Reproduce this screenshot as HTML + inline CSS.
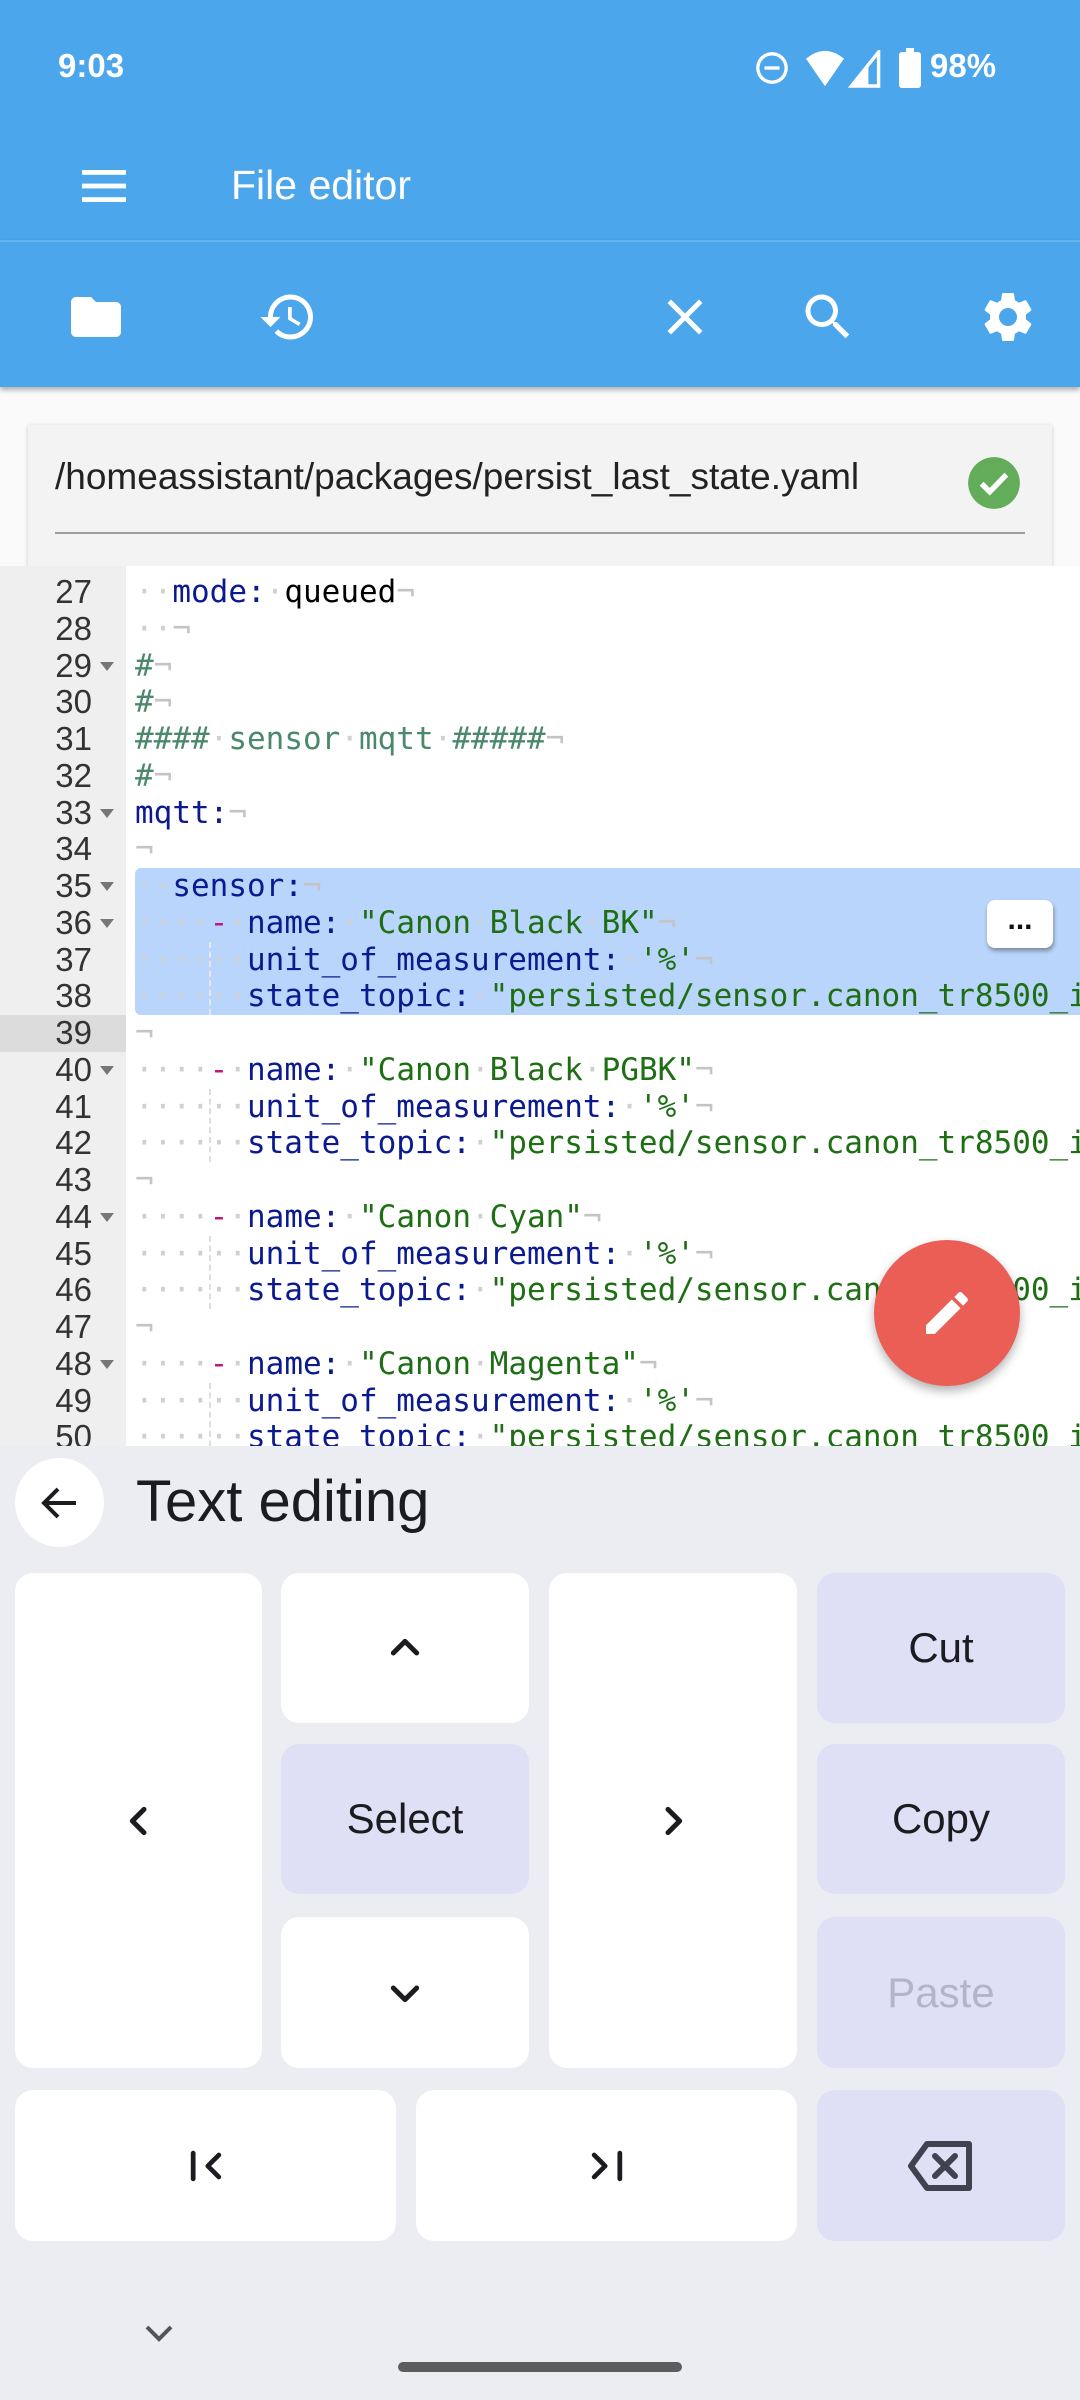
<!DOCTYPE html>
<html><head><meta charset="utf-8"><style>
*{margin:0;padding:0;box-sizing:border-box}
body{width:1080px;height:2400px;position:relative;overflow:hidden;background:#fafafa;font-family:"Liberation Sans",sans-serif}
.abs{position:absolute}
#top{left:0;top:0;width:1080px;height:240px;background:#4ca6ec}
#tool{left:0;top:240px;width:1080px;height:147px;background:#4ca6ec;border-top:2px solid #63b3f0;box-shadow:0 3px 5px rgba(0,0,0,.3)}
.w{color:#fff}
#card{left:28px;top:425px;width:1024px;height:200px;background:#f3f3f3;box-shadow:0 1px 4px rgba(0,0,0,.2)}
#editor{left:0;top:566px;width:1080px;height:880px;background:#fff;overflow:hidden}
#gutter{left:0;top:0;width:126px;height:880px;background:#efefef}
.code{position:absolute;left:0;top:8px;width:1080px;font-family:"DejaVu Sans Mono","Liberation Mono",monospace;font-size:31px;line-height:36.75px;white-space:nowrap}
.ln{height:36.75px;position:relative}
.num{position:absolute;left:0;width:92px;text-align:right;color:#333;font-family:"Liberation Sans",sans-serif;font-size:33px}
.fold{position:absolute;left:100px;top:14px;width:0;height:0;border-left:7px solid transparent;border-right:7px solid transparent;border-top:9px solid #777}
.txt{position:absolute;left:135px;white-space:pre}
.s{color:#d0d0d0}
.k{color:#0b1b8f}
.st{color:#1e6e14}
.c{color:#4c886b}
.d{color:#c0177e}
.p{color:#c4c4c4}
.key{position:absolute;border-radius:18px;background:#fff;display:flex;align-items:center;justify-content:center;font-size:42px;color:#1c1b1f}
.lav{background:#dfe0f6}
</style></head><body>
<div id="top" class="abs"></div>
<div class="abs w" style="left:58px;top:47px;font-size:33px;font-weight:bold">9:03</div>
<svg class="abs" style="left:752px;top:48px" width="40" height="40" viewBox="0 0 24 24"><circle cx="12" cy="12" r="8.5" fill="none" stroke="#fff" stroke-width="2"/><rect x="7.5" y="11" width="9" height="2" fill="#fff"/></svg>
<svg class="abs" style="left:804px;top:50px" width="42" height="38" viewBox="0 0 24 22"><path d="M1 5 Q12 -4 23 5 L12 21 Z" fill="#fff"/></svg>
<svg class="abs" style="left:848px;top:50px" width="34" height="38" viewBox="0 0 20 22"><path d="M18 1 L18 21 L2 21 Z" fill="none" stroke="#fff" stroke-width="2"/><path d="M12 8 L12 21 L2 21Z" fill="#fff"/></svg>
<svg class="abs" style="left:899px;top:48px" width="22" height="40" viewBox="0 0 11 20"><rect x="3.5" y="0" width="4" height="2" fill="#fff"/><rect x="0" y="2" width="11" height="18" rx="1.5" fill="#fff"/></svg>
<div class="abs w" style="left:930px;top:47px;font-size:33px;font-weight:bold">98%</div>
<svg class="abs" style="left:82px;top:170px" width="44" height="32" viewBox="0 0 22 16"><rect y="0" width="22" height="2.4" fill="#fff"/><rect y="6.8" width="22" height="2.4" fill="#fff"/><rect y="13.6" width="22" height="2.4" fill="#fff"/></svg>
<div class="abs w" style="left:231px;top:162px;font-size:41px">File editor</div>
<div id="tool" class="abs"></div>
<svg class="abs" style="left:66px;top:287px" width="60" height="60" viewBox="0 0 24 24"><path fill="#fff" d="M10 4H4c-1.1 0-2 .9-2 2v12c0 1.1.9 2 2 2h16c1.1 0 2-.9 2-2V8c0-1.1-.9-2-2-2h-8l-2-2z"/></svg>
<svg class="abs" style="left:258px;top:287px" width="60" height="60" viewBox="0 0 24 24"><path fill="#fff" d="M13 3a9 9 0 0 0-9 9H1l3.89 3.89.07.14L9 12H6c0-3.87 3.13-7 7-7s7 3.13 7 7-3.13 7-7 7c-1.93 0-3.68-.79-4.94-2.06l-1.42 1.42A8.954 8.954 0 0 0 13 21a9 9 0 0 0 0-18zm-1 5v5l4.280 2.54.72-1.21-3.5-2.08V8H12z"/></svg>
<svg class="abs" style="left:655px;top:287px" width="60" height="60" viewBox="0 0 24 24"><path fill="#fff" d="M19 6.41 17.59 5 12 10.59 6.41 5 5 6.41 10.59 12 5 17.59 6.41 19 12 13.41 17.59 19 19 17.59 13.41 12z"/></svg>
<svg class="abs" style="left:798px;top:287px" width="60" height="60" viewBox="0 0 24 24"><path fill="#fff" d="M15.5 14h-.79l-.28-.27A6.471 6.471 0 0 0 16 9.5 6.5 6.5 0 1 0 9.5 16c1.61 0 3.09-.59 4.23-1.57l.27.28v.79l5 4.99L20.49 19l-4.99-5zm-6 0C7.01 14 5 11.99 5 9.5S7.01 5 9.5 5 14 7.01 14 9.5 11.99 14 9.5 14z"/></svg>
<svg class="abs" style="left:978px;top:287px" width="60" height="60" viewBox="0 0 24 24"><path fill="#fff" d="M19.14 12.94c.04-.3.06-.61.06-.94 0-.32-.02-.64-.07-.94l2.03-1.58a.49.49 0 0 0 .12-.61l-1.92-3.32a.488.488 0 0 0-.59-.22l-2.39.96c-.5-.38-1.03-.7-1.62-.94l-.36-2.54a.484.484 0 0 0-.48-.41h-3.84c-.24 0-.43.17-.47.41l-.36 2.54c-.59.24-1.130.57-1.62.94l-2.39-.96c-.22-.08-.47 0-.59.22L2.74 8.87c-.12.21-.08.47.12.61l2.03 1.58c-.05.3-.09.63-.09.94s.02.64.07.94l-2.03 1.58a.49.49 0 0 0-.12.61l1.92 3.32c.12.22.37.29.59.22l2.39-.96c.5.38 1.03.7 1.62.94l.36 2.54c.05.24.24.41.48.41h3.84c.24 0 .44-.17.47-.41l.36-2.54c.59-.24 1.13-.56 1.62-.94l2.39.96c.22.08.47 0 .59-.22l1.92-3.32c.12-.22.07-.47-.12-.61l-2.01-1.58zM12 15.6c-1.98 0-3.6-1.62-3.6-3.6s1.62-3.6 3.6-3.6 3.6 1.62 3.6 3.6-1.62 3.6-3.6 3.6z"/></svg>
<div id="card" class="abs"></div>
<div class="abs" style="left:55px;top:456px;font-size:37px;color:#222">/homeassistant/packages/persist_last_state.yaml</div>
<div class="abs" style="left:55px;top:532px;width:970px;height:2px;background:#9e9e9e"></div>
<svg class="abs" style="left:967px;top:456px" width="54" height="54" viewBox="0 0 24 24"><circle cx="12" cy="12" r="11.5" fill="#62ac5a"/><path d="M6.5 12.3l3.6 3.6 7.4-7.6" fill="none" stroke="#fff" stroke-width="2.4"/></svg>
<div id="editor" class="abs">
<div id="gutter" class="abs"></div>
<div class="abs" style="left:0;top:449px;width:126px;height:37px;background:#dcdcdc"></div>
<div class="abs" style="left:135px;top:302px;width:945px;height:147px;background:#bad5fb;border-radius:6px 0 0 6px"></div>
<div class="abs" style="left:209px;top:376px;height:73px;border-left:2px dashed #e8e8e8"></div>
<div class="abs" style="left:209px;top:523px;height:73px;border-left:2px dashed #ddd"></div>
<div class="abs" style="left:209px;top:670px;height:73px;border-left:2px dashed #ddd"></div>
<div class="abs" style="left:209px;top:817px;height:73px;border-left:2px dashed #ddd"></div>
<div class="code"><div class="ln"><span class="num">27</span><span class="txt"><span class="s">··</span><span class="k">mode:</span><span class="s">·</span>queued<span class="p">¬</span></span></div><div class="ln"><span class="num">28</span><span class="txt"><span class="s">··</span><span class="p">¬</span></span></div><div class="ln"><span class="num">29</span><span class="fold"></span><span class="txt"><span class="c">#</span><span class="p">¬</span></span></div><div class="ln"><span class="num">30</span><span class="txt"><span class="c">#</span><span class="p">¬</span></span></div><div class="ln"><span class="num">31</span><span class="txt"><span class="c">####<span class="s">·</span>sensor<span class="s">·</span>mqtt<span class="s">·</span>#####</span><span class="p">¬</span></span></div><div class="ln"><span class="num">32</span><span class="txt"><span class="c">#</span><span class="p">¬</span></span></div><div class="ln"><span class="num">33</span><span class="fold"></span><span class="txt"><span class="k">mqtt:</span><span class="p">¬</span></span></div><div class="ln"><span class="num">34</span><span class="txt"><span class="p">¬</span></span></div><div class="ln"><span class="num">35</span><span class="fold"></span><span class="txt"><span class="s">··</span><span class="k">sensor:</span><span class="p">¬</span></span></div><div class="ln"><span class="num">36</span><span class="fold"></span><span class="txt"><span class="s">····</span><span class="d">-</span><span class="s">·</span><span class="k">name:</span><span class="s">·</span><span class="st">"Canon<span class="s">·</span>Black<span class="s">·</span>BK"</span><span class="p">¬</span></span></div><div class="ln"><span class="num">37</span><span class="txt"><span class="s">······</span><span class="k">unit_of_measurement:</span><span class="s">·</span><span class="st">'%'</span><span class="p">¬</span></span></div><div class="ln"><span class="num">38</span><span class="txt"><span class="s">······</span><span class="k">state_topic:</span><span class="s">·</span><span class="st">"persisted/sensor.canon_tr8500_ink"</span></span></div><div class="ln"><span class="num">39</span><span class="txt"><span class="p">¬</span></span></div><div class="ln"><span class="num">40</span><span class="fold"></span><span class="txt"><span class="s">····</span><span class="d">-</span><span class="s">·</span><span class="k">name:</span><span class="s">·</span><span class="st">"Canon<span class="s">·</span>Black<span class="s">·</span>PGBK"</span><span class="p">¬</span></span></div><div class="ln"><span class="num">41</span><span class="txt"><span class="s">······</span><span class="k">unit_of_measurement:</span><span class="s">·</span><span class="st">'%'</span><span class="p">¬</span></span></div><div class="ln"><span class="num">42</span><span class="txt"><span class="s">······</span><span class="k">state_topic:</span><span class="s">·</span><span class="st">"persisted/sensor.canon_tr8500_ink"</span></span></div><div class="ln"><span class="num">43</span><span class="txt"><span class="p">¬</span></span></div><div class="ln"><span class="num">44</span><span class="fold"></span><span class="txt"><span class="s">····</span><span class="d">-</span><span class="s">·</span><span class="k">name:</span><span class="s">·</span><span class="st">"Canon<span class="s">·</span>Cyan"</span><span class="p">¬</span></span></div><div class="ln"><span class="num">45</span><span class="txt"><span class="s">······</span><span class="k">unit_of_measurement:</span><span class="s">·</span><span class="st">'%'</span><span class="p">¬</span></span></div><div class="ln"><span class="num">46</span><span class="txt"><span class="s">······</span><span class="k">state_topic:</span><span class="s">·</span><span class="st">"persisted/sensor.canon_tr8500_ink"</span></span></div><div class="ln"><span class="num">47</span><span class="txt"><span class="p">¬</span></span></div><div class="ln"><span class="num">48</span><span class="fold"></span><span class="txt"><span class="s">····</span><span class="d">-</span><span class="s">·</span><span class="k">name:</span><span class="s">·</span><span class="st">"Canon<span class="s">·</span>Magenta"</span><span class="p">¬</span></span></div><div class="ln"><span class="num">49</span><span class="txt"><span class="s">······</span><span class="k">unit_of_measurement:</span><span class="s">·</span><span class="st">'%'</span><span class="p">¬</span></span></div><div class="ln"><span class="num">50</span><span class="txt"><span class="s">······</span><span class="k">state_topic:</span><span class="s">·</span><span class="st">"persisted/sensor.canon_tr8500_ink"</span></span></div></div>
<div class="abs" style="left:987px;top:334px;width:66px;height:48px;background:#fff;border-radius:8px;box-shadow:1px 3px 4px rgba(0,0,0,.35);text-align:center;font-size:30px;line-height:40px;color:#111;font-weight:bold">...</div>
</div>
<div class="abs" style="left:874px;top:1240px;width:146px;height:146px;border-radius:50%;background:#eb5e56;box-shadow:0 5px 10px rgba(0,0,0,.3)"></div>
<svg class="abs" style="left:919px;top:1285px" width="56" height="56" viewBox="0 0 24 24"><path fill="#fff" d="M3 17.25V21h3.75L17.81 9.94l-3.75-3.75L3 17.25zM20.71 7.04a1 1 0 0 0 0-1.41l-2.34-2.34a1 1 0 0 0-1.41 0l-1.83 1.83 3.75 3.75 1.83-1.83z"/></svg>
<div class="abs" style="left:0;top:1446px;width:1080px;height:954px;background:#ececf3"></div>
<div class="abs" style="left:15px;top:1458px;width:89px;height:89px;border-radius:50%;background:#fff"></div>
<svg class="abs" style="left:36px;top:1479px" width="48" height="48" viewBox="0 0 24 24"><path d="M20 12H4.5M11 5l-7 7 7 7" fill="none" stroke="#1c1b1f" stroke-width="2"/></svg>
<div class="abs" style="left:136px;top:1468px;font-size:58px;color:#1c1b1f">Text editing</div>
<div class="key" style="left:15px;top:1573px;width:247px;height:495px"><svg width="40" height="40" viewBox="0 0 24 24"><path d="M15 5l-7 7 7 7" fill="none" stroke="#1c1b1f" stroke-width="3" stroke-linecap="round" stroke-linejoin="round"/></svg></div>
<div class="key" style="left:281px;top:1573px;width:248px;height:150px"><svg width="40" height="40" viewBox="0 0 24 24"><path d="M5 15l7-7 7 7" fill="none" stroke="#1c1b1f" stroke-width="3" stroke-linecap="round" stroke-linejoin="round"/></svg></div>
<div class="key lav" style="left:281px;top:1744px;width:248px;height:150px">Select</div>
<div class="key" style="left:281px;top:1917px;width:248px;height:151px"><svg width="40" height="40" viewBox="0 0 24 24"><path d="M5 9l7 7 7-7" fill="none" stroke="#1c1b1f" stroke-width="3" stroke-linecap="round" stroke-linejoin="round"/></svg></div>
<div class="key" style="left:549px;top:1573px;width:248px;height:495px"><svg width="40" height="40" viewBox="0 0 24 24"><path d="M9 5l7 7-7 7" fill="none" stroke="#1c1b1f" stroke-width="3" stroke-linecap="round" stroke-linejoin="round"/></svg></div>
<div class="key lav" style="left:817px;top:1573px;width:248px;height:150px">Cut</div>
<div class="key lav" style="left:817px;top:1744px;width:248px;height:150px">Copy</div>
<div class="key lav" style="left:817px;top:1917px;width:248px;height:151px;color:#b3b4c8">Paste</div>
<div class="key" style="left:15px;top:2090px;width:381px;height:151px"><svg width="44" height="44" viewBox="0 0 24 24"><path d="M5 5v14M19 6l-6 6 6 6" fill="none" stroke="#1c1b1f" stroke-width="2.6" stroke-linecap="round" stroke-linejoin="round"/></svg></div>
<div class="key" style="left:416px;top:2090px;width:381px;height:151px"><svg width="44" height="44" viewBox="0 0 24 24"><path d="M19 5v14M5 6l6 6-6 6" fill="none" stroke="#1c1b1f" stroke-width="2.6" stroke-linecap="round" stroke-linejoin="round"/></svg></div>
<div class="key lav" style="left:817px;top:2090px;width:248px;height:151px"><svg width="72" height="60" viewBox="0 0 36 30"><path d="M11 4h21v22H11L3 15z" fill="none" stroke="#40424f" stroke-width="3" stroke-linejoin="round"/><path d="M15 10l10 10M25 10l-10 10" stroke="#40424f" stroke-width="3" stroke-linecap="round"/></svg></div>
<svg class="abs" style="left:143px;top:2323px" width="32" height="22" viewBox="0 0 16 11"><path d="M2 2l6 6 6-6" fill="none" stroke="#555" stroke-width="2"/></svg>
<div class="abs" style="left:398px;top:2362px;width:284px;height:10px;border-radius:5px;background:#5d5d60"></div>
</body></html>
